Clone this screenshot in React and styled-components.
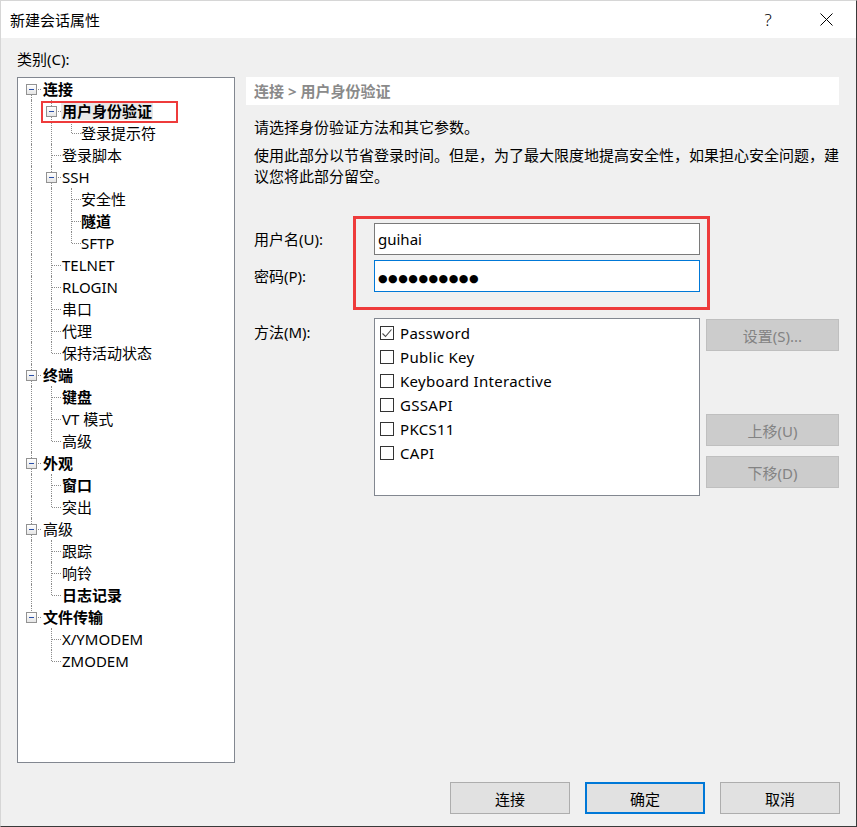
import React from 'react'
import styled, { createGlobalStyle, css } from 'styled-components'

const GlobalStyle = createGlobalStyle`
  body {
    margin: 0;
    background: #fff;
    font-family: "Noto Sans", "Noto Sans CJK SC", sans-serif;
    font-size: 15px;
    color: #000;
  }
`

const Window = styled.div`
  width: 857px;
  height: 827px;
  box-sizing: border-box;
  display: flex;
  flex-direction: column;
  background: #f0f0f0;
  border-top: 1px solid #d6d6d6;
  border-left: 1px solid #d6d6d6;
  border-right: 1px solid #3a3a3a;
  border-bottom: 1px solid #3a3a3a;
`

const TitleBar = styled.div`
  height: 37px;
  flex: none;
  display: flex;
  align-items: center;
  background: #fff;
  padding-left: 9px;
  padding-right: 7px;
`

const Title = styled.div`
  flex: 1;
  font-size: 15px;
  line-height: 20px;
`

const TitleButton = styled.div`
  width: 46px;
  height: 37px;
  display: flex;
  align-items: center;
  justify-content: center;
  font-size: 17px;
  font-weight: 300;
  margin-left: ${p => p.$ml || 0}px;
`

const Body = styled.div`
  flex: 1;
  display: flex;
  flex-direction: column;
  padding: 11px 16px 12px 16px;
`

const Caption = styled.div`
  line-height: 20px;
  height: 20px;
`

const Content = styled.div`
  display: flex;
  gap: 11px;
  height: 686px;
  margin-top: 8px;
`

const Tree = styled.div`
  width: 218px;
  flex: none;
  box-sizing: border-box;
  border: 1px solid #828790;
  background: #fff;
  padding-left: 3px;
`

const Row = styled.div`
  position: relative;
  display: flex;
  align-items: center;
  height: 22px;
`

const Cell = styled.span`
  position: relative;
  flex: none;
  width: 20px;
  height: 22px;
  ${p => p.$line && css`
    &::before {
      content: '';
      position: absolute;
      left: 10px;
      top: 0;
      bottom: 0;
      border-left: 1px dotted #8c8c8c;
    }
  `}
`

const Connector = styled.span`
  position: relative;
  flex: none;
  width: 20px;
  height: 22px;
  &::before {
    content: '';
    position: absolute;
    left: 10px;
    top: ${p => (p.$top ? 0 : 11)}px;
    bottom: ${p => (p.$bottom ? 0 : 11)}px;
    border-left: 1px dotted #8c8c8c;
  }
  &::after {
    content: '';
    position: absolute;
    left: 11px;
    width: 9px;
    top: 11px;
    border-top: 1px dotted #8c8c8c;
  }
`

const Expander = styled.span`
  position: absolute;
  z-index: 1;
  left: 5px;
  top: 6px;
  width: 11px;
  height: 11px;
  box-sizing: border-box;
  border: 1px solid #929292;
  background: linear-gradient(#ffffff, #e6e6e6);
  &::before {
    content: '';
    position: absolute;
    left: 2px;
    right: 2px;
    top: 4px;
    height: 1px;
    background: #2a4fa8;
  }
`

const Label = styled.span`
  margin-left: ${p => 1 - p.$depth}px;
  padding: 0 1px;
  line-height: 18px;
  white-space: nowrap;
  font-weight: ${p => (p.$bold ? 700 : 400)};
  background: ${p => (p.$selected ? '#e8e8e8' : 'transparent')};
`

const Mark = styled.div`
  position: absolute;
  left: ${p => p.$left}px;
  top: ${p => p.$top}px;
  width: ${p => p.$width}px;
  height: ${p => p.$height}px;
  box-sizing: border-box;
  border: ${p => p.$thick}px solid #ee3b3b;
  pointer-events: none;
  z-index: 2;
`

const Panel = styled.div`
  flex: 1;
  margin-right: 1px;
  display: flex;
  flex-direction: column;
`

const Crumb = styled.div`
  height: 28px;
  line-height: 28px;
  background: #fff;
  padding-left: 8px;
  color: #8a8a8a;
  font-weight: 700;
`

const Text = styled.div`
  padding-left: 8px;
  line-height: 21px;
  white-space: nowrap;
  margin-top: ${p => p.$mt}px;
`

const Form = styled.div`
  position: relative;
  margin-top: 36px;
  padding-left: 8px;
  display: flex;
  flex-direction: column;
`

const FieldRow = styled.div`
  display: grid;
  grid-template-columns: 114px 326px 133px;
  column-gap: 6px;
  margin-top: ${p => p.$mt || 0}px;
`

const FieldLabel = styled.div`
  align-self: ${p => (p.$top ? 'start' : 'center')};
  padding-top: ${p => (p.$top ? 4 : 0)}px;
  line-height: 21px;
`

const Input = styled.div`
  height: 32px;
  box-sizing: border-box;
  border: 1px solid ${p => (p.$focus ? '#0078d7' : '#7a7a7a')};
  background: #fff;
  padding-left: 3px;
  line-height: 30px;
  font-size: 15px;
`

const Dots = styled.span`
  font-family: "DejaVu Sans", sans-serif;
  font-size: 11px;
  letter-spacing: 0.5px;
`

const ListBox = styled.div`
  height: 178px;
  box-sizing: border-box;
  border: 1px solid #828790;
  background: #fff;
  padding: 2px 0 0 5px;
`

const Option = styled.div`
  display: flex;
  align-items: center;
  gap: 6px;
  height: 24px;
  white-space: nowrap;
  letter-spacing: 0.3px;
`

const Box = styled.span`
  width: 14px;
  height: 14px;
  flex: none;
  box-sizing: border-box;
  border: 1px solid #333;
  background: #fff;
  display: flex;
  align-items: center;
  justify-content: center;
`

const SideButtons = styled.div`
  display: flex;
  flex-direction: column;
`

const SideButton = styled.div`
  height: 32px;
  box-sizing: border-box;
  margin-top: ${p => p.$mt}px;
  background: #cccccc;
  border: 1px solid #bfbfbf;
  color: #838383;
  display: flex;
  align-items: center;
  justify-content: center;
`

const Footer = styled.div`
  display: flex;
  justify-content: flex-end;
  gap: 15px;
  margin-top: 19px;
`

const Button = styled.div`
  width: 120px;
  height: 32px;
  box-sizing: border-box;
  background: #e1e1e1;
  border: ${p => (p.$primary ? '2px solid #0078d7' : '1px solid #adadad')};
  display: flex;
  align-items: center;
  justify-content: center;
`

const tree = [
  { label: '连接', bold: true, children: [
    { label: '用户身份验证', bold: true, selected: true, children: [{ label: '登录提示符' }] },
    { label: '登录脚本' },
    { label: 'SSH', children: [{ label: '安全性' }, { label: '隧道', bold: true }, { label: 'SFTP' }] },
    { label: 'TELNET' },
    { label: 'RLOGIN' },
    { label: '串口' },
    { label: '代理' },
    { label: '保持活动状态' },
  ] },
  { label: '终端', bold: true, children: [{ label: '键盘', bold: true }, { label: 'VT 模式' }, { label: '高级' }] },
  { label: '外观', bold: true, children: [{ label: '窗口', bold: true }, { label: '突出' }] },
  { label: '高级', children: [{ label: '跟踪' }, { label: '响铃' }, { label: '日志记录', bold: true }] },
  { label: '文件传输', bold: true, children: [{ label: 'X/YMODEM' }, { label: 'ZMODEM' }] },
]

// flatten the tree, keeping which ancestor levels still have siblings below
function flatten(nodes, depth = 0, lines = [], out = []) {
  nodes.forEach((n, i) => {
    const last = i === nodes.length - 1
    out.push({ ...n, depth, lines, last, first: depth === 0 && i === 0 })
    if (n.children) flatten(n.children, depth + 1, [...lines, !last], out)
  })
  return out
}

const rows = flatten(tree)

const methods = ['Password', 'Public Key', 'Keyboard Interactive', 'GSSAPI', 'PKCS11', 'CAPI']

function Check() {
  return (
    <svg width="12" height="12" viewBox="0 0 12 12">
      <polyline points="1.5,6.5 4.5,9.5 10.5,2.5" fill="none" stroke="#4a4a4a" strokeWidth="1.1" />
    </svg>
  )
}

export default function App() {
  return (
    <>
      <GlobalStyle />
      <Window>
        <TitleBar>
          <Title>新建会话属性</Title>
          <TitleButton>?</TitleButton>
          <TitleButton $ml={12}>
            <svg width="13" height="13" viewBox="0 0 13 13">
              <path d="M0.5 0.5 L12.5 12.5 M12.5 0.5 L0.5 12.5" stroke="#000" strokeWidth="1" />
            </svg>
          </TitleButton>
        </TitleBar>
        <Body>
          <Caption>类别(C):</Caption>
          <Content>
            <Tree>
              {rows.map((r, idx) => (
                <Row key={idx}>
                  {r.lines.map((l, k) => <Cell key={k} $line={l} />)}
                  <Connector $top={!r.first} $bottom={!r.last}>
                    {r.children && <Expander />}
                  </Connector>
                  <Label $depth={r.depth} $bold={r.bold} $selected={r.selected}>{r.label}</Label>
                  {r.selected && <Mark $left={r.depth * 20} $top={1} $width={137} $height={22} $thick={2} />}
                </Row>
              ))}
            </Tree>
            <Panel>
              <Crumb>连接 &gt; 用户身份验证</Crumb>
              <Text $mt={12}>请选择身份验证方法和其它参数。</Text>
              <Text $mt={7}>
                使用此部分以节省登录时间。但是，为了最大限度地提高安全性，如果担心安全问题，建
                <br />
                议您将此部分留空。
              </Text>
              <Form>
                <FieldRow>
                  <FieldLabel>用户名(U):</FieldLabel>
                  <Input>guihai</Input>
                </FieldRow>
                <FieldRow $mt={5}>
                  <FieldLabel>密码(P):</FieldLabel>
                  <Input $focus><Dots>●●●●●●●●●●</Dots></Input>
                </FieldRow>
                <FieldRow $mt={26}>
                  <FieldLabel $top>方法(M):</FieldLabel>
                  <ListBox>
                    {methods.map((m, i) => (
                      <Option key={m}>
                        <Box>{i === 0 && <Check />}</Box>
                        {m}
                      </Option>
                    ))}
                  </ListBox>
                  <SideButtons>
                    <SideButton $mt={1}>设置(S)...</SideButton>
                    <SideButton $mt={63}>上移(U)</SideButton>
                    <SideButton $mt={10}>下移(D)</SideButton>
                  </SideButtons>
                </FieldRow>
                <Mark $left={107} $top={-7} $width={357} $height={94} $thick={3} />
              </Form>
            </Panel>
          </Content>
          <Footer>
            <Button>连接</Button>
            <Button $primary>确定</Button>
            <Button>取消</Button>
          </Footer>
        </Body>
      </Window>
    </>
  )
}
